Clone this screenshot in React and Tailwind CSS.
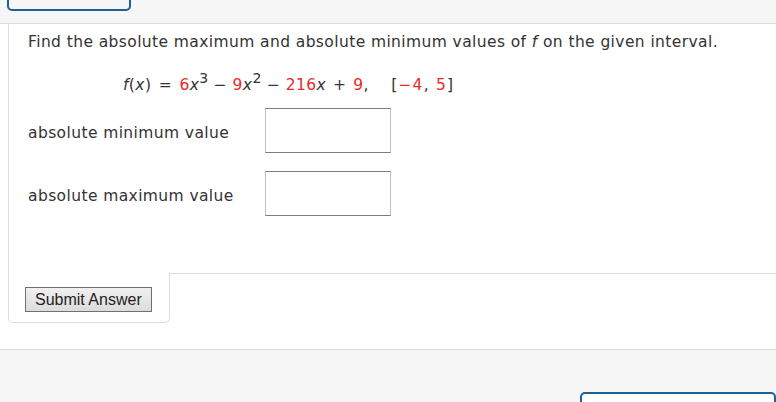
import React from "react";

const red = "text-[#ea2a2a]";

const AnswerRow = ({ label, className }) => (
  <div className={`flex items-center ${className}`}>
    <span className="w-[237px] shrink-0 pt-[6px]">{label}</span>
    <input
      type="text"
      className="w-[126px] h-[45px] bg-white border border-x-[#c2c2c2] border-y-[#7d7d7d] outline-none"
    />
  </div>
);

export default function App() {
  return (
    <div className="w-[776px] h-[402px] overflow-hidden bg-white text-[#333] font-['DejaVu_Sans',Verdana,sans-serif] text-[15.5px] tracking-[0.4px]">
      {/* top strip */}
      <div className="h-[24px] bg-[#f6f6f6] border-b border-[#dddddd] overflow-hidden">
        <div className="ml-[7px] -mt-[20px] w-[124px] h-[31px] border-2 border-[#1b6097] rounded-[5px]" />
      </div>

      <div className="ml-[8px]">
        {/* question */}
        <div className="h-[249px] border-l border-[#dddddd] pl-[19px] pt-[8px]">
          <p className="leading-[20px]">
            Find the absolute maximum and absolute minimum values of <i>f</i> on the given interval.
          </p>
          <p className="leading-[20px] mt-[23px] pl-[95px] whitespace-pre">
            <i>f</i>(<i>x</i>) <span className="mx-[2px]">=</span> <span className={red}>6</span>
            <i>x</i>
            <sup className="text-[14px]">3</sup> − <span className={red}>9</span>
            <i>x</i>
            <sup className="text-[14px]">2</sup> − <span className={red}>216</span>
            <i>x</i> <span className="mx-[1.5px]">+</span> <span className={red}>9</span>,{"    "}
            <span className="ml-[1px] tracking-[1.2px]">
              [<span className={red}>−4</span>, <span className={red}>5</span>]
            </span>
          </p>
          <AnswerRow label="absolute minimum value" className="mt-[13px]" />
          <AnswerRow label="absolute maximum value" className="mt-[18px]" />
        </div>

        {/* submit row */}
        <div className="flex">
          <div className="w-[162px] h-[50px] border-l border-r border-b border-[#dddddd] rounded-b-[5px] pl-[16px] pt-[14px]">
            <button className="h-[25px] px-[9px] border border-[#707070] bg-gradient-to-b from-[#f0f0f0] to-[#dcdcdc] text-[#222] text-[16px] tracking-normal leading-[22px] font-['Liberation_Sans',Arial,sans-serif]">
              Submit Answer
            </button>
          </div>
          <div className="flex-1 border-t border-[#dddddd]" />
        </div>
      </div>

      {/* footer */}
      <div className="mt-[26px] h-[60px] bg-[#f6f6f6] border-t border-[#dddddd] pt-[42px]">
        <div className="ml-[580px] h-[30px] border-2 border-[#1b6097] rounded-[5px] bg-white" />
      </div>
    </div>
  );
}
